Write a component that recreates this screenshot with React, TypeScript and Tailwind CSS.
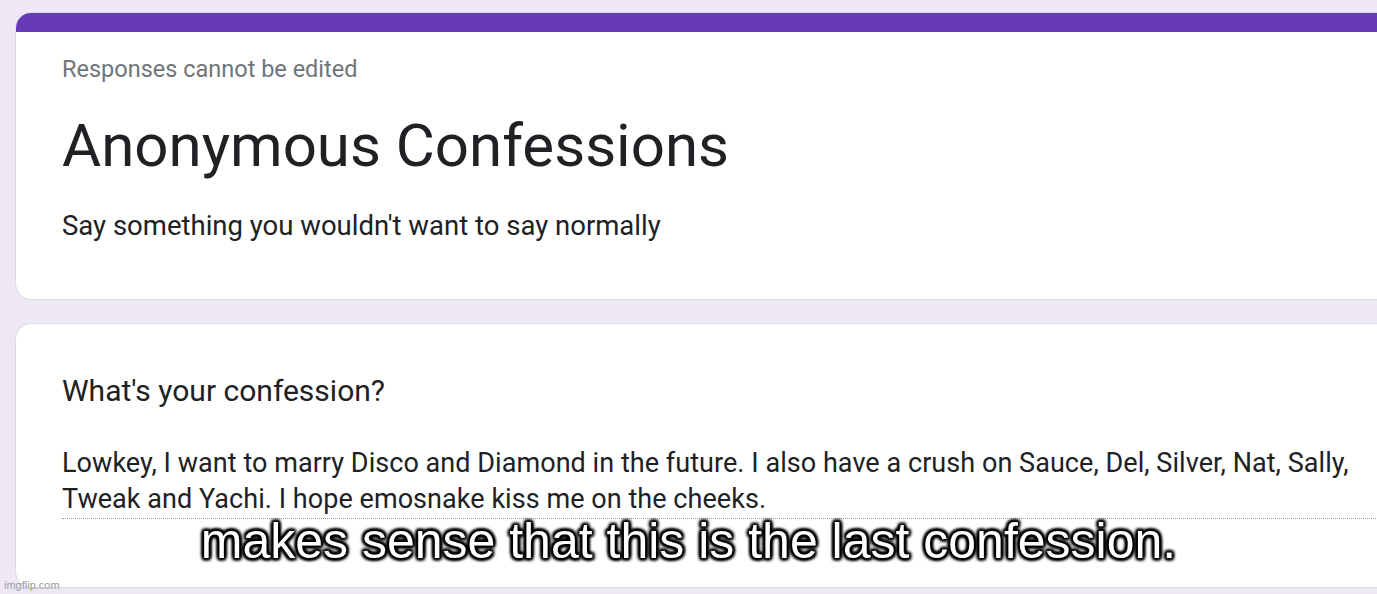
export default function App() {
  const roboto = { fontFamily: 'Roboto, "Noto Sans", sans-serif' }
  return (
    <div className="w-[1377px] h-[594px] bg-[#ede7f6] overflow-hidden relative" style={roboto}>
      <div className="pl-[15px] pt-[12px] w-[1420px]">
        {/* Header card */}
        <div className="h-[288px] bg-white rounded-[16px] border border-[#dadce0] overflow-hidden">
          <div className="h-[19px] bg-[#673ab7]" />
          <div className="pl-[46px] pt-[23px]">
            <p className="text-[23.5px] leading-[28px] text-[#70757a]">Responses cannot be edited</p>
            <h1 className="mt-[27px] text-[60px] leading-[72px] text-[#202124]">Anonymous Confessions</h1>
            <p className="mt-[27px] text-[27.5px] leading-[34px] text-[#202124]">Say something you wouldn't want to say normally</p>
          </div>
        </div>

        {/* Question card */}
        <div className="mt-[23px] h-[265px] bg-white rounded-[16px] border border-[#dadce0]">
          <div className="pl-[46px] pt-[49px] w-[1362px]">
            <p className="text-[30px] leading-[36px] text-[#202124]">What's your confession?</p>
            <div className="mt-[36px] border-b border-dotted border-[#9aa0a6] pb-[1px]">
              <p className="text-[27px] leading-[36px] text-[#202124] tracking-[0.05px] pr-[20px]">
                Lowkey, I want to marry Disco and Diamond in the future. I also have a crush on Sauce, Del, Silver, Nat, Sally, Tweak and Yachi. I hope emosnake kiss me on the cheeks.
              </p>
            </div>
          </div>
        </div>
      </div>

      {/* Meme caption overlay */}
      <div
        className="absolute left-0 right-0 top-[512px] text-center text-white text-[50px] leading-[58px]"
        style={{
          fontFamily: '"Liberation Sans", Arial, sans-serif',
          textShadow:
            '2px 2px 3px #000, -2px -2px 3px #000, 2px -2px 3px #000, -2px 2px 3px #000, 0 2px 3px #000, 0 -2px 3px #000, 2px 0 3px #000, -2px 0 3px #000, 0 0 5px #000',
        }}
      >
        makes sense that this is the last confession.
      </div>

      {/* Watermark */}
      <div
        className="absolute left-[4px] top-[578px] text-[11px] leading-[14px] text-[#9e9e9e]"
        style={{ fontFamily: '"Liberation Sans", Arial, sans-serif' }}
      >
        imgflip.com
      </div>
    </div>
  )
}
